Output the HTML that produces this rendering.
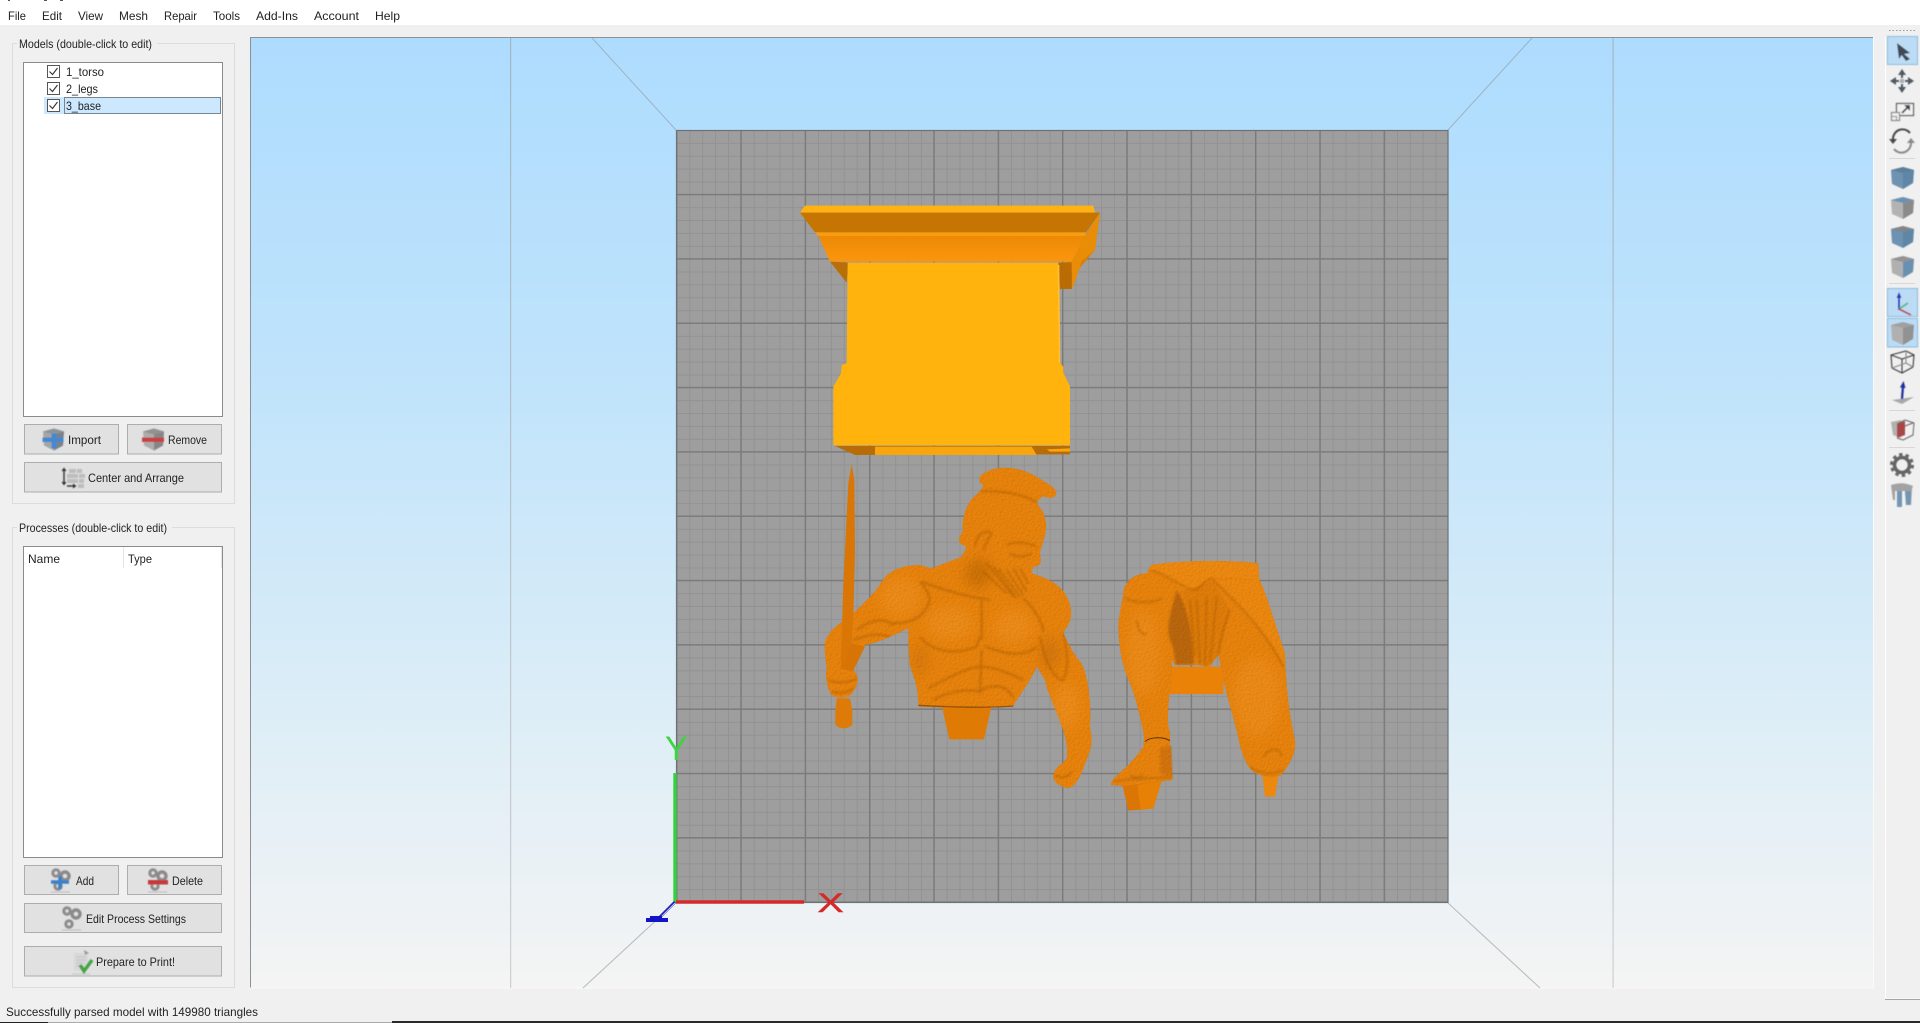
<!DOCTYPE html>
<html><head><meta charset="utf-8"><title>Simplify3D</title>
<style>
html,body{margin:0;padding:0;background:#f0f0f0;width:1920px;height:1023px;overflow:hidden}
svg{display:block}
text{font-family:"Liberation Sans",sans-serif;font-size:12px;fill:#222}
</style></head><body>
<svg width="1920" height="1023" viewBox="0 0 1920 1023" xmlns="http://www.w3.org/2000/svg">
<defs>
<linearGradient id="sky" x1="0" y1="0" x2="0" y2="1">
<stop offset="0" stop-color="#aedcfe"/><stop offset=".35" stop-color="#bfe3fb"/><stop offset=".7" stop-color="#dcedf7"/><stop offset="1" stop-color="#f4f4f4"/>
</linearGradient>
<linearGradient id="vline" x1="0" y1="0" x2="0" y2="1"><stop offset="0" stop-color="#a3b6c4"/><stop offset="1" stop-color="#cfcfcf"/></linearGradient>
<pattern id="minor" x="676.5" y="130" width="12.866" height="12.866" patternUnits="userSpaceOnUse">
<rect width="12.866" height="12.866" fill="#9e9e9e"/><rect width="1" height="12.866" fill="#929292"/><rect width="12.866" height="1" fill="#929292"/>
</pattern>
<pattern id="major" x="676" y="129.5" width="64.33" height="64.33" patternUnits="userSpaceOnUse">
<rect width="1.4" height="64.33" fill="#7a7a7a"/><rect width="64.33" height="1.4" fill="#7a7a7a"/>
</pattern>
<filter id="b1" x="-10%" y="-10%" width="120%" height="120%"><feGaussianBlur stdDeviation="3"/></filter>
<filter id="b2" x="-40%" y="-40%" width="180%" height="180%"><feGaussianBlur stdDeviation="18"/></filter>
<filter id="soft" filterUnits="userSpaceOnUse" x="0" y="0" width="1920" height="1023"><feGaussianBlur stdDeviation=".4"/></filter>
<filter id="bump" x="0" y="0" width="100%" height="100%" color-interpolation-filters="sRGB">
<feTurbulence type="fractalNoise" baseFrequency=".14" numOctaves="2" seed="3" result="n"/>
<feDiffuseLighting in="n" surfaceScale=".7" lighting-color="#fff" result="l"><feDistantLight azimuth="225" elevation="70"/></feDiffuseLighting>
<feComposite in="l" in2="SourceGraphic" operator="arithmetic" k1="1.06" k2="0" k3="0" k4="0" result="m"/>
<feComposite in="m" in2="SourceAlpha" operator="in"/>
</filter>
<linearGradient id="slope" x1="0" y1="0" x2="0" y2="1"><stop offset="0" stop-color="#ec8a06"/><stop offset="1" stop-color="#fb950d"/></linearGradient>
<g id="gears">
<circle cx="7" cy="5" r="3.2" fill="none" stroke="#8c8c8c" stroke-width="3"/>
<circle cx="16" cy="8" r="4" fill="none" stroke="#8a8a8a" stroke-width="3.4"/>
<circle cx="9" cy="18" r="3.2" fill="none" stroke="#8c8c8c" stroke-width="3"/>
<path d="M2 24h19" stroke="#bcbcbc" stroke-width="1"/>
</g>
</defs>

<!-- menu -->
<rect width="1920" height="25" fill="#fff"/>
<rect x="8" y="0" width="2" height="1" fill="#555"/><rect x="44" y="0" width="3" height="1" fill="#555"/><rect x="60" y="0" width="3" height="1" fill="#555"/>
<text x="8" y="20" textLength="18" lengthAdjust="spacingAndGlyphs">File</text>
<text x="42" y="20" textLength="20" lengthAdjust="spacingAndGlyphs">Edit</text>
<text x="78" y="20" textLength="25" lengthAdjust="spacingAndGlyphs">View</text>
<text x="119" y="20" textLength="29" lengthAdjust="spacingAndGlyphs">Mesh</text>
<text x="164" y="20" textLength="33" lengthAdjust="spacingAndGlyphs">Repair</text>
<text x="213" y="20" textLength="27" lengthAdjust="spacingAndGlyphs">Tools</text>
<text x="256" y="20" textLength="42" lengthAdjust="spacingAndGlyphs">Add-Ins</text>
<text x="314" y="20" textLength="45" lengthAdjust="spacingAndGlyphs">Account</text>
<text x="375" y="20" textLength="25" lengthAdjust="spacingAndGlyphs">Help</text>

<!-- viewport -->
<rect x="250" y="37" width="1623" height="951" fill="url(#sky)"/>
<path d="M250.500 988V37.500H1873" fill="none" stroke="#8d9196" stroke-width="1"/>
<path d="M1873.500 37V988H250" fill="none" stroke="#fafafa" stroke-width="1"/>
<rect x="510" y="38" width="1.200" height="950" fill="url(#vline)"/><rect x="1612.500" y="38" width="1.200" height="950" fill="url(#vline)"/>
<path d="M592 38L676 130M1532 38L1448 130" fill="none" stroke="#9cb2c3" stroke-width="1"/>
<path d="M583 988L676 902M1540 988L1448 903" fill="none" stroke="#b9bcbf" stroke-width="1.100"/>

<!-- plate -->
<rect x="676" y="130" width="772" height="772" fill="url(#minor)"/>
<rect x="676" y="130" width="772" height="772" fill="url(#major)"/>
<rect x="676.500" y="130.500" width="771.500" height="772" fill="none" stroke="#6c7277" stroke-width="1.200"/>

<!-- base -->
<g transform="translate(780,190) scale(.33333)">
<path d="M840 218L875 215 915 138 960 68 945 180 885 250 875 297H840Z" fill="#d67f03"/>
<path d="M835 218H875V297H840Z" fill="#b96c04"/>
<path d="M875 215L915 138 960 68 945 180 905 215 877 297Z" fill="#e98c06"/>
<path d="M150 215L205 218 200 278Z" fill="#b96e08"/>
<path d="M75 47H940L945 68H60Z" fill="#ffb212"/>
<path d="M60 68H960L918 127H105Z" fill="#c67502"/>
<path d="M105 127H918L915 138H115Z" fill="#f99c0f"/>
<path d="M115 138H915L875 215H150Z" fill="url(#slope)"/>
<path d="M165 768H870V793L225 795Z" fill="#b76c08"/>
<path d="M285 770H755L770 795H285Z" fill="#f7a60d"/>
<path d="M800 778L870 775V785L810 785Z" fill="#f7a60d"/>
<path d="M203 218H835L840 520 850 530V548L870 590V766H160V590L183 550 185 525 200 520Z" fill="#ffb30c"/>
<path d="M833 225h5l3 295h-5z" fill="#ffbe38"/>
</g>

<!-- torso -->
<g transform="translate(810,450) scale(.33333)">
<path d="M395 766H545L522 868H418Z" fill="#df7b04"/>
<path d="M80 745H120L127 780V825Q100 845 76 825V780Z" fill="#de7a08"/>
<g filter="url(#bump)">
<path d="M45 575C60 530 110 510 140 480 170 450 195 430 215 395 235 360 280 345 330 345L365 355C390 345 430 330 455 320L470 290C450 285 440 270 450 258L458 245C455 200 470 150 510 125L520 105C500 95 505 75 530 65 570 45 630 50 680 80 710 100 745 115 738 135 730 150 705 140 695 140L680 160C700 180 712 210 708 240 705 265 695 285 690 310 695 335 695 350 670 350L665 370C700 380 740 395 765 430 790 470 790 510 765 540L760 550C775 580 795 620 815 640 835 680 845 760 840 830 850 880 845 890 830 930 815 970 800 1010 775 1015 750 1010 725 995 730 975 735 950 755 945 770 925 775 880 760 840 745 800 725 750 710 720 705 690L680 650C660 700 620 745 610 770 560 775 400 775 325 770 325 730 320 700 300 650 295 600 295 570 295 535 260 550 220 575 165 585L130 660C150 680 145 700 130 725 120 745 85 750 65 735 50 715 45 680 50 650 45 620 42 600 45 575Z" fill="#e5810c"/>
<g filter="url(#b2)" opacity=".45">
<ellipse cx="270" cy="440" rx="60" ry="60" fill="#f09425"/>
<ellipse cx="420" cy="520" rx="70" ry="50" fill="#f09425"/>
<ellipse cx="610" cy="530" rx="60" ry="50" fill="#f09425"/>
<ellipse cx="770" cy="770" rx="40" ry="70" fill="#f09425"/>
<ellipse cx="505" cy="370" rx="40" ry="45" fill="#a95b06"/>
<ellipse cx="720" cy="610" rx="28" ry="50" fill="#b7650a"/>
<ellipse cx="330" cy="630" rx="18" ry="50" fill="#ba670a"/>
</g>
<g fill="none" stroke="#b3620a" stroke-width="5" filter="url(#b1)" opacity=".8">
<path d="M515 450V570M330 560C360 600 430 620 500 590L510 560M525 590C580 610 640 625 680 590"/>
<path d="M515 600L510 730M355 715C420 680 480 650 510 650 560 650 620 680 640 690M370 750C430 715 490 720 510 725 540 700 590 700 610 745"/>
<path d="M330 395C360 430 370 450 345 480 320 520 270 520 240 520M335 395C400 420 470 440 540 450M640 445C680 480 700 530 700 545"/>
<path d="M690 560C700 620 730 690 760 690 780 650 770 600 760 550M140 540C180 510 220 500 250 525M130 570C160 560 200 545 240 560"/>
<path d="M510 125C560 120 640 130 680 158"/>
<path d="M495 290C500 250 530 235 545 250 535 265 525 285 520 300M590 285C620 270 660 280 680 290M600 310C620 325 650 320 665 310"/>
<path d="M55 690C80 700 110 700 140 685M65 725C85 730 110 730 130 715"/>
<path d="M735 975C755 985 770 985 785 965"/>
</g>
<path d="M325 766C420 772 540 774 610 768" fill="none" stroke="#96530a" stroke-width="4"/>
<g fill="none" stroke="#a05607" stroke-width="3" filter="url(#b1)" opacity=".85">
<path d="M530 340L610 440M550 350L620 445M565 355L630 440M590 360L640 435M520 365L590 430M610 355L650 425M630 355L655 400"/>
</g>
</g>
<path d="M125 42L133 90 135 300 130 500 125 580 92 655 100 400 115 100Z" fill="#d97606"/>
<path d="M125 580L165 590 128 665 92 655Z" fill="#d67405"/>
</g>

<!-- legs -->
<g transform="translate(1050,540) scale(.33333)">
<path d="M218 738L335 722 310 805 235 812Z" fill="#db7604"/>
<path d="M262 735L335 722 310 805 272 810Z" fill="#e78106"/>
<path d="M637 705L685 708 675 770H645Z" fill="#ec880e"/>
<path d="M360 380H520V462H355Z" fill="#ea8208"/>
<g filter="url(#bump)">
<path d="M303 75C380 60 560 60 625 70L628 118C650 160 680 270 705 340L708 400C712 470 720 530 735 600 740 640 720 670 695 705 670 715 630 710 610 695 590 680 580 650 570 620 560 560 530 470 520 420L505 345 480 380 440 375 375 375 365 360C370 420 350 480 355 560L360 575V620L368 720 220 738 183 735 185 725C200 700 240 680 280 620L282 590C270 520 250 450 235 420 210 360 205 300 205 250 210 210 215 190 220 160 220 130 250 100 290 100Z" fill="#e5810c"/>
<path d="M380 150C410 190 430 280 432 373L378 375C372 340 372 320 360 300 345 260 370 190 380 150Z" fill="#b8650a" filter="url(#b1)"/>
<path d="M395 155L490 125 540 210 505 345 470 380 440 370C430 280 415 210 395 155Z" fill="#dd7b0a"/>
<path d="M303 75C380 60 560 60 625 70L628 118 490 112 460 125C430 155 400 150 385 140 360 115 330 100 303 92Z" fill="#ea8710"/>
<path d="M490 120L628 118C650 160 680 270 705 340V385C680 330 630 270 600 240 570 210 530 160 490 120Z" fill="#e9860f"/>
<g filter="url(#b2)" opacity=".4">
<ellipse cx="620" cy="470" rx="70" ry="120" fill="#f09425"/>
<ellipse cx="280" cy="340" rx="50" ry="130" fill="#f09425"/>
</g>
<g fill="none" stroke="#b0600a" stroke-width="4" filter="url(#b1)" opacity=".8">
<path d="M305 92C350 100 400 150 440 150 460 130 470 118 490 115"/>
<path d="M440 180L450 370M470 170L465 375M500 170L480 370M420 180L435 350"/>
<path d="M490 120C550 180 640 260 700 380M540 210C520 260 510 310 505 345"/>
<path d="M225 175C260 190 310 190 335 175M260 240C265 270 275 290 290 280"/>
<path d="M190 725C240 715 300 715 365 712M240 705C250 715 270 715 280 705"/>
<path d="M600 680C630 705 670 705 700 690M640 650C660 620 690 620 695 650"/>
</g>
<path d="M330 625L365 615 368 712 330 700Z" fill="#d0720a" filter="url(#b1)"/>
</g>
<path d="M285 605C300 590 340 590 360 602" fill="none" stroke="#5a3306" stroke-width="3"/>
</g>

<!-- axes -->
<path d="M675 773V902" stroke="#33d33d" stroke-width="3.400"/>
<path d="M676 902H804" stroke="#d62a2a" stroke-width="3.400"/>
<path d="M675 902L660 917" stroke="#2323b8" stroke-width="3"/><path d="M675 903L661 917" stroke="#dfe3f5" stroke-width=".8"/>
<rect x="646" y="918" width="22" height="4" fill="#1313c8"/><rect x="650" y="916" width="12" height="3" fill="#1313c8"/>
<text transform="translate(665,760)" style="font-size:34px;fill:#3fd43f">Y</text>
<text transform="translate(817.500,912) scale(1.450,1)" style="font-size:27px;fill:#d42a2a;stroke:#d42a2a;stroke-width:.5">X</text>

<!-- group boxes -->
<g fill="none" stroke="#dcdcdc" stroke-width="1">
<path d="M17 43.500H12.500V503.500H234.500V43.500H157"/>
<path d="M17 527.500H12.500V987.500H234.500V527.500H172"/>
</g>
<text x="19" y="48" textLength="133" lengthAdjust="spacingAndGlyphs">Models (double-click to edit)</text>
<text x="19" y="532" textLength="148" lengthAdjust="spacingAndGlyphs">Processes (double-click to edit)</text>

<!-- tree -->
<rect x="23.500" y="62.500" width="199" height="354" fill="#fff" stroke="#8b8b8b"/>
<rect x="44" y="97" width="177" height="17" fill="#cce8ff"/>
<rect x="64.500" y="97.500" width="156" height="16" fill="none" stroke="#222" stroke-width="1" stroke-dasharray="1 1"/>
<g fill="#fff" stroke="#555" stroke-width="1">
<rect x="47.500" y="65.500" width="12" height="12"/><rect x="47.500" y="82.500" width="12" height="12"/><rect x="47.500" y="99.500" width="12" height="12"/>
</g>
<g fill="none" stroke="#333" stroke-width="1.100">
<path d="M49.500 71.500l3 3 5-6.500M49.500 88.500l3 3 5-6.500M49.500 105.500l3 3 5-6.500"/>
</g>
<text x="66" y="76" textLength="38" lengthAdjust="spacingAndGlyphs">1_torso</text>
<text x="66" y="93" textLength="32" lengthAdjust="spacingAndGlyphs">2_legs</text>
<text x="66" y="110" textLength="35" lengthAdjust="spacingAndGlyphs">3_base</text>

<!-- list -->
<rect x="23.500" y="546.500" width="199" height="311" fill="#fff" stroke="#8b8b8b"/>
<path d="M123.500 547V568M221.500 547V568" stroke="#e5e5e5"/>
<text x="28" y="563" textLength="32" lengthAdjust="spacingAndGlyphs">Name</text>
<text x="128" y="563" textLength="24" lengthAdjust="spacingAndGlyphs">Type</text>

<!-- buttons -->
<g fill="#e1e1e1" stroke="#adadad" stroke-width="1">
<rect x="24.500" y="424.500" width="94" height="29.500"/>
<rect x="127.500" y="424.500" width="94" height="29.500"/>
<rect x="24.500" y="462.500" width="197" height="29.500"/>
<rect x="24.500" y="865.500" width="94" height="29"/>
<rect x="127.500" y="865.500" width="94" height="29"/>
<rect x="24.500" y="903.500" width="197" height="29"/>
<rect x="24.500" y="946.500" width="197" height="29.500"/>
</g>
<text x="68" y="444" textLength="33" lengthAdjust="spacingAndGlyphs">Import</text>
<text x="168" y="444" textLength="39" lengthAdjust="spacingAndGlyphs">Remove</text>
<text x="88" y="482" textLength="96" lengthAdjust="spacingAndGlyphs">Center and Arrange</text>
<text x="76" y="885" textLength="18" lengthAdjust="spacingAndGlyphs">Add</text>
<text x="172" y="885" textLength="31" lengthAdjust="spacingAndGlyphs">Delete</text>
<text x="86" y="923" textLength="100" lengthAdjust="spacingAndGlyphs">Edit Process Settings</text>
<text x="96" y="966" textLength="79" lengthAdjust="spacingAndGlyphs">Prepare to Print!</text>

<g filter="url(#soft)">
<!-- import icon -->
<g transform="translate(53,439.500)"><path d="M-10-8L1-11 11-8 10 6 1 11-9 6Z" fill="#a5a5a5"/><path d="M-10-8L1-11 11-8 1-5Z" fill="#8d9498"/><path d="M1-5L11-8 10 6 1 11Z" fill="#7d8286"/><path d="M-1.500-6h5v4h7v4.500h-7V9h-5V2.500h-9V-2h9z" fill="#4488d0"/></g>
<g transform="translate(153,439.500)"><path d="M-10-8L1-11 11-8 10 6 1 11-9 6Z" fill="#adadad"/><path d="M-10-8L1-11 11-8 1-5Z" fill="#929292"/><path d="M1-5L11-8 10 6 1 11Z" fill="#868686"/><rect x="-11" y="-2" width="22" height="4.500" fill="#c84345"/></g>
<!-- arrange -->
<g transform="translate(61,468)"><path d="M3 1V16" stroke="#333" stroke-width="1.400"/><path d="M0.500 3L3-0.500 5.500 3zM0.500 14L3 17.500 5.500 14z" fill="#333"/>
<g fill="#bdbdbd"><rect x="8" y="1" width="7" height="4"/><rect x="16" y="1" width="5" height="4"/><rect x="6" y="6" width="11" height="4"/><rect x="18" y="6" width="6" height="4"/><rect x="6" y="11" width="11" height="4"/><rect x="18" y="11" width="5" height="4"/><rect x="17" y="16" width="6" height="4"/></g>
<path d="M6 18H13" stroke="#333" stroke-width="1.400"/><path d="M12 15.500L15.500 18 12 20.500z" fill="#333"/></g>
<!-- add -->
<g transform="translate(49,868)"><use href="#gears"/><path d="M2 14H20M11 8V21" stroke="#3a80c8" stroke-width="3.600"/></g>
<g transform="translate(146,868)"><use href="#gears"/><rect x="2" y="12" width="20" height="4.500" fill="#c8383a"/></g>
<g transform="translate(60,906)"><use href="#gears"/></g>
<!-- prepare -->
<g transform="translate(72,950)"><rect x="2" y="3" width="14" height="18" fill="#d8d8d8"/><path d="M4 7h10M4 10h10M4 13h8M4 16h8" stroke="#c2c2c2"/><path d="M12 0l5 3-4 2z" fill="#9a9a9a"/><path d="M0 24h18" stroke="#c5c5c5"/><path d="M8 15l4 6 8-11" fill="none" stroke="#45a542" stroke-width="3.600"/></g>

<!-- right toolbar icons -->
<rect x="1887.500" y="36.500" width="30" height="28" fill="#bcdcf5" stroke="#88bbe0"/>
<rect x="1887.500" y="288.500" width="30" height="28" fill="#bcdcf5" stroke="#88bbe0"/>
<rect x="1887.500" y="318.500" width="30" height="28.500" fill="#bcdcf5" stroke="#88bbe0"/>
<path d="M1897 43L1910 53 1904 54 1910 59 1906 61 1901.700 55 1899 59Z" fill="#3f4a58"/>
<g fill="#505a64"><path d="M1902 69l4 6h-3v3h-2v-3h-3zM1902 93l4-6h-3v-3h-2v3h-3zM1890 81l6-4v3h3v2h-3v3zM1914 81l-6-4v3h-3v2h3v3z"/></g><rect x="1900" y="79" width="4" height="4" fill="#a5aeb6"/>
<rect x="1896.500" y="103.500" width="17" height="12" fill="#f2f2f2" stroke="#555" stroke-width="1.200"/><path d="M1902 113l6-6" stroke="#3d4650" stroke-width="1.800"/><path d="M1904 105h6v6z" fill="#3d4650"/>
<rect x="1891.500" y="112.500" width="8" height="8" fill="#f0f0f0" stroke="#888" stroke-width="1.200"/><rect x="1891.500" y="116.500" width="5" height="4" fill="none" stroke="#888"/>
<path d="M1893 139a9.500 9.500 0 0 1 17-6" fill="none" stroke="#4a4a4a" stroke-width="2"/><path d="M1889 139h8l-4 5z" fill="#4a4a4a"/>
<path d="M1911 143a9.500 9.500 0 0 1-17 6" fill="none" stroke="#8a8a8a" stroke-width="2"/><path d="M1915 143h-8l4-5z" fill="#8a8a8a"/>
<g transform="translate(1902,177)"><path d="M-11-7L1-10 12-7 11 6 1 12-10 7Z" fill="#6d92b2"/><path d="M-11-7L1-10 12-7 1-4Z" fill="#5d7f9b"/><path d="M1-4L12-7 11 6 1 12Z" fill="#5f86a6"/></g>
<g transform="translate(1902,207)"><path d="M-11-7L1-10 12-7 11 6 1 12-10 7Z" fill="#b3b3b3"/><path d="M-11-7L1-10 12-7 1-4Z" fill="#6c92b2"/><path d="M1-4L12-7 11 6 1 12Z" fill="#8a8a8a"/></g>
<g transform="translate(1902,236)"><path d="M-11-7L1-10 12-7 11 6 1 12-10 7Z" fill="#6d92b2"/><path d="M-11-7L1-10 12-7 1-4Z" fill="#858585"/><path d="M1-4L12-7 11 6 1 12Z" fill="#5f86a6"/></g>
<g transform="translate(1902,266)"><path d="M-11-7L1-10 12-7 11 6 1 12-10 7Z" fill="#b0b0b0"/><path d="M-11-7L1-10 12-7 1-4Z" fill="#939393"/><path d="M1-4L12-7 11 6 1 12Z" fill="#6a90b0"/></g>
<path d="M1899 310V296" stroke="#2233bb" stroke-width="2"/><path d="M1896.500 298l2.500-6 2.500 6z" fill="#2233bb"/><path d="M1899 309l9-6" stroke="#55b880" stroke-width="1.800"/><path d="M1899 309l12 6" stroke="#c0394a" stroke-width="1.800"/>
<g transform="translate(1902,333)"><path d="M-11-8L1-11 12-8 11 6 1 12-10 7Z" fill="#b0b0b0"/><path d="M-11-8L1-11 12-8 1-5Z" fill="#a0a0a0"/><path d="M1-5L12-8 11 6 1 12Z" fill="#929292"/></g>
<g transform="translate(1902,362)" fill="none" stroke="#3c3c3c" stroke-width="1.100"><path d="M-11-7L4-11 12-7 11 5 0 11-10 6Z"/><path d="M-11-7L0-3 12-7M0-3V11"/><path d="M4-11V1L-10 6M4 1L11 5" stroke="#888"/></g>
<path d="M1892 400L1914 397 1902 404Z" fill="#a8a8a8"/><path d="M1902 399L1903 386" stroke="#1e2f9c" stroke-width="2.200"/><path d="M1900 387.500l3.500-6.500 2 7z" fill="#1e2f9c"/>
<g transform="translate(1902,429)"><path d="M-11-7L-1-9-1 9-9 6Z" fill="#b0b0b0"/><path d="M-5-5L3-8 3 6-5 9Z" fill="#a84745"/><path d="M3-9L12-6 11 6 1 11-5 9M3-9L-5-5M11-6L3-3" fill="none" stroke="#666" stroke-width="1"/></g>
<circle cx="1902" cy="465" r="7.500" fill="none" stroke="#666" stroke-width="3.600"/><circle cx="1902" cy="465" r="10.500" fill="none" stroke="#666" stroke-width="3" stroke-dasharray="3.400 3.200"/>
<path d="M1891 485Q1902 481 1913 486L1912 489 1911 505H1906L1905 491H1902V507H1897V491H1895V500H1893Z" fill="#a2a2a2"/><path d="M1897 491h5v16h-5zM1905 491h6v14h-5z" fill="#7596b2"/>
</g>

<!-- status -->
<text x="6" y="1016" textLength="252" lengthAdjust="spacingAndGlyphs">Successfully parsed model with 149980 triangles</text>
<rect x="0" y="1022" width="48" height="1" fill="#222"/><rect x="48" y="1022" width="344" height="1" fill="#aaa"/><rect x="392" y="1021" width="1528" height="2" fill="#2a2a2a"/>

<!-- right toolbar frame -->
<path d="M1885.500 37V999H1920" fill="none" stroke="#fff"/>
<path d="M1885 999.500H1920" stroke="#a5a5a5"/>
<path d="M1889 30.500H1916" stroke="#9a9a9a" stroke-dasharray="1.500 2"/>
<path d="M1889 158.500H1915M1889 283.500H1915M1889 410.500H1915M1889 447.500H1915" stroke="#d8d8d8"/>
</svg>
</body></html>
